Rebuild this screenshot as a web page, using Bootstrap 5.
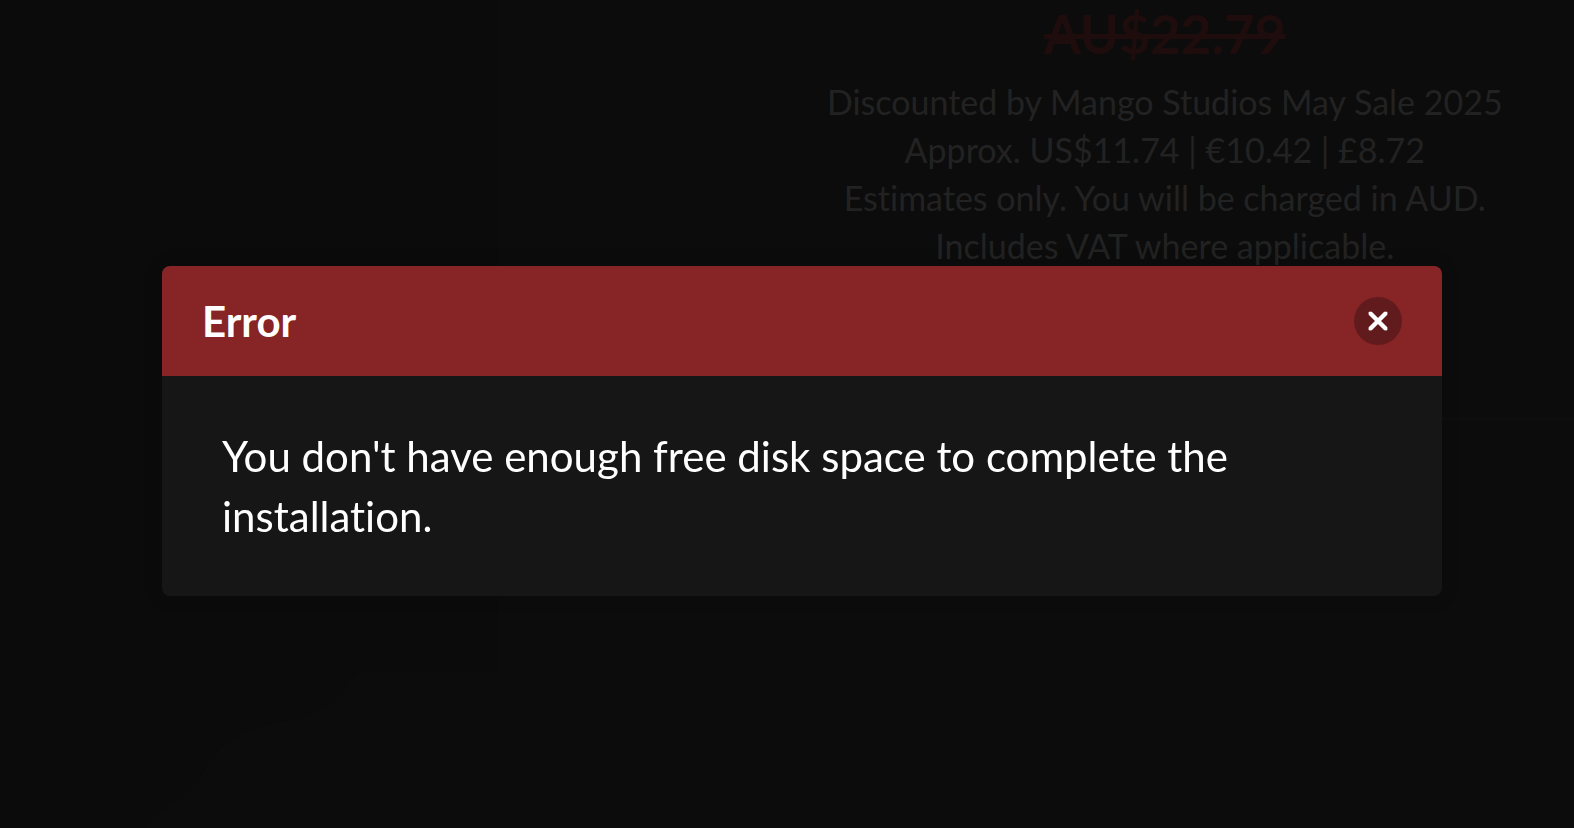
<!DOCTYPE html>
<html lang="en">
<head>
<meta charset="utf-8">
<meta name="viewport" content="width=device-width, initial-scale=1">
<title>Error</title>
<link href="https://cdn.jsdelivr.net/npm/bootstrap@5.3.0/dist/css/bootstrap.min.css" rel="stylesheet">
<style>
  body { background: #0c0c0c; color: #222; font-family: Lato, "Open Sans", sans-serif; font-variant-ligatures: no-common-ligatures; }
  .store-page { min-height: 100vh; }
  .cover-art { width: 500px; height: 828px; }
  .price-panel { width: 52%; height: 420px; border-bottom: 3px solid #0e0e0e; }
  .old-price { font-size: 53px; line-height: 68px; font-weight: 700; color: #1f0d0e; text-decoration-thickness: 5px; }
  .price-notes { font-size: 34px; line-height: 48px; margin-top: 10px; }
  .error-wrap { padding: 266px 132px 0 162px; }
  .error-dialog { width: 100%; max-width: 1280px; margin: 0; }
  .error-box { background: #161616; color: #fff; border: 0; border-radius: 8px; box-shadow: 0 0 20px #0002; overflow: hidden; }
  .error-head { background: #862426; height: 110px; padding: 0 40px; border: 0; border-radius: 0; }
  .error-title { font-size: 42px; line-height: 60px; font-weight: 700; }
  .error-text { padding: 50px 60px; font-size: 42px; line-height: 60px; }
  .close-btn { width: 48px; height: 48px; background: #611b1d; }
</style>
</head>
<body>
<main class="store-page d-flex justify-content-between overflow-hidden">
  <svg class="cover-art flex-shrink-0" viewBox="0 0 500 828" aria-hidden="true">
    <path fill="#0b0b0b" d="M0 0H498V671H361C340 694 328 711 300 718C265 725 231 732 214 755C202 772 202 780 183 795C160 812 151 819 144 828H0Z"/>
  </svg>
  <section class="price-panel text-center">
    <del class="old-price d-block">AU$22.79</del>
    <div class="price-notes">
      <div>Discounted by Mango Studios May Sale 2025</div>
      <div>Approx. US$11.74 | €10.42 | £8.72</div>
      <div>Estimates only. You will be charged in AUD.</div>
      <div>Includes VAT where applicable.</div>
    </div>
  </section>
</main>
<div class="modal d-block error-wrap" role="dialog" aria-modal="true" aria-labelledby="errorTitle">
  <div class="modal-dialog error-dialog">
    <div class="modal-content error-box">
      <div class="modal-header error-head">
        <h1 class="modal-title error-title" id="errorTitle">Error</h1>
        <button type="button" class="close-btn btn border-0 rounded-circle p-0 d-flex align-items-center justify-content-center" aria-label="Close">
          <svg width="20" height="20" viewBox="0 0 20 20" aria-hidden="true"><path d="M2 2L18 18M18 2L2 18" stroke="#fff" stroke-width="4.4"/><path d="M2 2L18 18M18 2L2 18" stroke="#fff" stroke-width="3" stroke-linecap="round"/></svg>
        </button>
      </div>
      <div class="modal-body error-text">You don't have enough free disk space to complete the installation.</div>
    </div>
  </div>
</div>
<script src="https://cdn.jsdelivr.net/npm/bootstrap@5.3.0/dist/js/bootstrap.bundle.min.js"></script>
</body>
</html>
